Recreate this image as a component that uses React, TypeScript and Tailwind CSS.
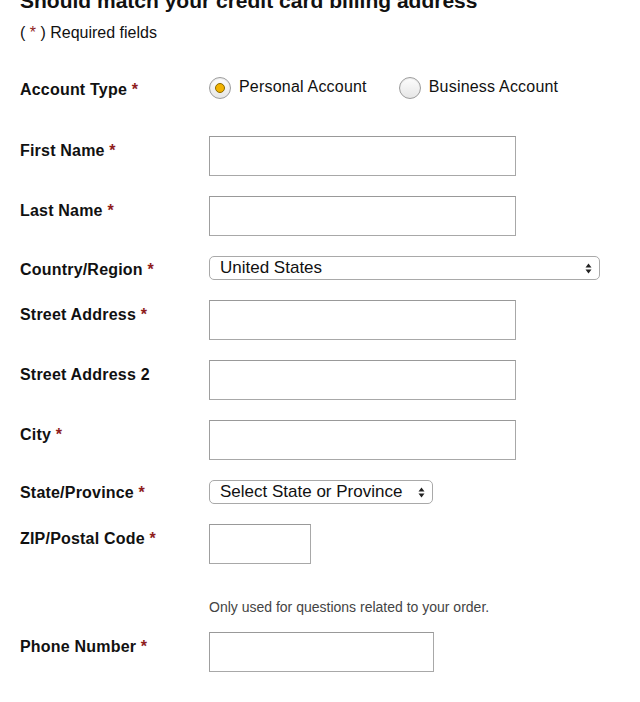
import React from 'react';

const Req = () => <span className="text-[#8f1d1d]"> *</span>;

const Label: React.FC<{ text: string; required?: boolean; offset?: string }> = ({ text, required, offset = 'pt-[5px]' }) => (
  <div className={`w-[189px] shrink-0 text-[16px] font-bold leading-5 tracking-[0.2px] ${offset}`}>
    {text}
    {required && <Req />}
  </div>
);

const TextBox: React.FC<{ width: string }> = ({ width }) => (
  <input
    type="text"
    className={`${width} h-10 border border-[#a8a8a8] border-t-[#999] border-l-[#9f9f9f] bg-white outline-none`}
  />
);

const Arrows = () => (
  <svg width="7" height="11" viewBox="0 0 7 11" aria-hidden="true">
    <path d="M3.5 0.5 L6.5 4.5 L0.5 4.5 Z" fill="#222" />
    <path d="M3.5 10.5 L6.5 6.5 L0.5 6.5 Z" fill="#222" />
  </svg>
);

const SelectBox: React.FC<{ width: string; value: string }> = ({ width, value }) => (
  <div
    className={`${width} flex h-6 items-center justify-between rounded-[5px] border border-[#a9a9a9] bg-white pl-[10px] pr-[7px] text-[17px] leading-5 text-[#111]`}
  >
    <span>{value}</span>
    <Arrows />
  </div>
);

const Radio: React.FC<{ checked?: boolean; label: string }> = ({ checked, label }) => (
  <div className="flex items-center gap-2">
    <span className="flex h-[22px] w-[22px] items-center justify-center rounded-full border border-[#9c9c9c] bg-gradient-to-b from-[#fdfdfd] to-[#e6e6e6] shadow-[inset_0_1px_1px_rgba(0,0,0,0.08)]">
      {checked && <span className="h-[10px] w-[10px] rounded-full border border-[#8a6a00] bg-[#f2b300]" />}
    </span>
    <span className="-mt-[2px] text-[16px] leading-5 tracking-[0.2px]">{label}</span>
  </div>
);

const Row: React.FC<{ children: React.ReactNode }> = ({ children }) => <div className="flex items-start">{children}</div>;

export default function App() {
  return (
    <div className="min-h-[702px] w-[640px] overflow-hidden bg-white pl-5 font-['Liberation_Sans',Arial,sans-serif] text-[#111]">
      <h2 className="-mt-[11px] whitespace-nowrap text-[21px] font-bold leading-6">Should match your credit card billing address</h2>
      <p className="mt-[10px] text-[16px] leading-5">
        ( <span className="text-[#8f1d1d]">*</span> ) Required fields
      </p>

      <div className="mt-[34px] flex h-[22px] items-start">
        <Label text="Account Type" required offset="pt-[3px]" />
        <div className="flex items-center gap-[32px]">
          <Radio checked label="Personal Account" />
          <Radio label="Business Account" />
        </div>
      </div>

      <div className="mt-[37px] flex flex-col gap-5">
        <Row>
          <Label text="First Name" required />
          <TextBox width="w-[307px]" />
        </Row>
        <Row>
          <Label text="Last Name" required />
          <TextBox width="w-[307px]" />
        </Row>
        <Row>
          <Label text="Country/Region" required offset="pt-[4px]" />
          <SelectBox width="w-[391px]" value="United States" />
        </Row>
        <Row>
          <Label text="Street Address" required />
          <TextBox width="w-[307px]" />
        </Row>
        <Row>
          <Label text="Street Address 2" />
          <TextBox width="w-[307px]" />
        </Row>
        <Row>
          <Label text="City" required />
          <TextBox width="w-[307px]" />
        </Row>
        <Row>
          <Label text="State/Province" required offset="pt-[3px]" />
          <SelectBox width="w-[224px]" value="Select State or Province" />
        </Row>
        <Row>
          <Label text="ZIP/Postal Code" required />
          <TextBox width="w-[102px]" />
        </Row>
      </div>

      <div className="mt-[34px] flex">
        <div className="w-[189px] shrink-0" />
        <p className="text-[14px] leading-[18px] text-[#444]">Only used for questions related to your order.</p>
      </div>

      <div className="mt-[16px]">
        <Row>
          <Label text="Phone Number" required />
          <TextBox width="w-[225px]" />
        </Row>
      </div>
    </div>
  );
}
